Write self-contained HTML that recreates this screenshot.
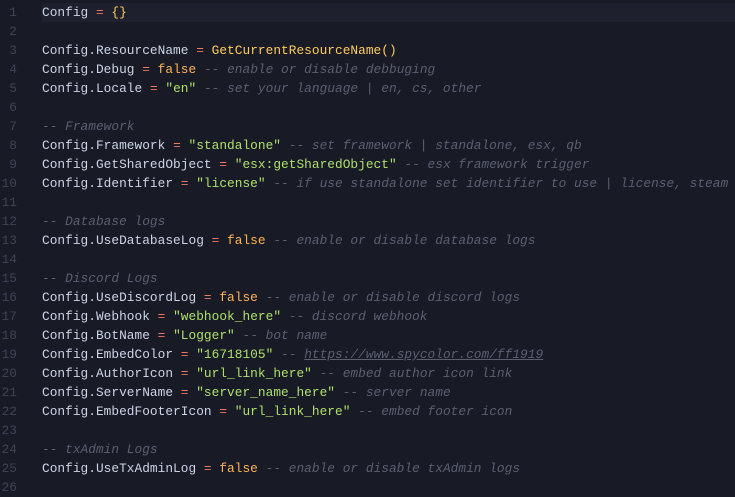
<!DOCTYPE html>
<html><head><meta charset="utf-8"><style>
html,body{margin:0;padding:0;background:#181a26;width:735px;height:497px;overflow:hidden}
.w{position:relative;font-family:"Liberation Mono",monospace;font-size:12.8px;letter-spacing:0.03px;color:#ccd4e6}
.l{position:absolute;left:0;height:19px;line-height:19px;white-space:pre;width:735px}
.n{position:absolute;left:0;width:17px;text-align:right;color:#3f4453}
.c{position:absolute;left:42px}
.hl{background:#1e202d}
.o{color:#f07860}.f{color:#ffb454}.s{color:#aee06a}.y{color:#ffcc5c}.cm{color:#5a6070;font-style:italic}
.u{text-decoration:underline}
</style></head><body><div class="w">
<div class="l hl" style="top:3px;left:42px;width:693px"></div>
<div class="l" style="top:3px"><span class="n">1</span><span class="c">Config <span class="o">=</span> <span class="y">{}</span></span></div>
<div class="l" style="top:22px"><span class="n">2</span></div>
<div class="l" style="top:41px"><span class="n">3</span><span class="c">Config.ResourceName <span class="o">=</span> <span class="y">GetCurrentResourceName()</span></span></div>
<div class="l" style="top:60px"><span class="n">4</span><span class="c">Config.Debug <span class="o">=</span> <span class="f">false</span> <span class="cm">-- enable or disable debbuging</span></span></div>
<div class="l" style="top:79px"><span class="n">5</span><span class="c">Config.Locale <span class="o">=</span> <span class="s">"en"</span> <span class="cm">-- set your language | en, cs, other</span></span></div>
<div class="l" style="top:98px"><span class="n">6</span></div>
<div class="l" style="top:117px"><span class="n">7</span><span class="c"><span class="cm">-- Framework</span></span></div>
<div class="l" style="top:136px"><span class="n">8</span><span class="c">Config.Framework <span class="o">=</span> <span class="s">"standalone"</span> <span class="cm">-- set framework | standalone, esx, qb</span></span></div>
<div class="l" style="top:155px"><span class="n">9</span><span class="c">Config.GetSharedObject <span class="o">=</span> <span class="s">"esx:getSharedObject"</span> <span class="cm">-- esx framework trigger</span></span></div>
<div class="l" style="top:174px"><span class="n">10</span><span class="c">Config.Identifier <span class="o">=</span> <span class="s">"license"</span> <span class="cm">-- if use standalone set identifier to use | license, steam</span></span></div>
<div class="l" style="top:193px"><span class="n">11</span></div>
<div class="l" style="top:212px"><span class="n">12</span><span class="c"><span class="cm">-- Database logs</span></span></div>
<div class="l" style="top:231px"><span class="n">13</span><span class="c">Config.UseDatabaseLog <span class="o">=</span> <span class="f">false</span> <span class="cm">-- enable or disable database logs</span></span></div>
<div class="l" style="top:250px"><span class="n">14</span></div>
<div class="l" style="top:269px"><span class="n">15</span><span class="c"><span class="cm">-- Discord Logs</span></span></div>
<div class="l" style="top:288px"><span class="n">16</span><span class="c">Config.UseDiscordLog <span class="o">=</span> <span class="f">false</span> <span class="cm">-- enable or disable discord logs</span></span></div>
<div class="l" style="top:307px"><span class="n">17</span><span class="c">Config.Webhook <span class="o">=</span> <span class="s">"webhook_here"</span> <span class="cm">-- discord webhook</span></span></div>
<div class="l" style="top:326px"><span class="n">18</span><span class="c">Config.BotName <span class="o">=</span> <span class="s">"Logger"</span> <span class="cm">-- bot name</span></span></div>
<div class="l" style="top:345px"><span class="n">19</span><span class="c">Config.EmbedColor <span class="o">=</span> <span class="s">"16718105"</span> <span class="cm">-- <span class="u">https://www.spycolor.com/ff1919</span></span></span></div>
<div class="l" style="top:364px"><span class="n">20</span><span class="c">Config.AuthorIcon <span class="o">=</span> <span class="s">"url_link_here"</span> <span class="cm">-- embed author icon link</span></span></div>
<div class="l" style="top:383px"><span class="n">21</span><span class="c">Config.ServerName <span class="o">=</span> <span class="s">"server_name_here"</span> <span class="cm">-- server name</span></span></div>
<div class="l" style="top:402px"><span class="n">22</span><span class="c">Config.EmbedFooterIcon <span class="o">=</span> <span class="s">"url_link_here"</span> <span class="cm">-- embed footer icon</span></span></div>
<div class="l" style="top:421px"><span class="n">23</span></div>
<div class="l" style="top:440px"><span class="n">24</span><span class="c"><span class="cm">-- txAdmin Logs</span></span></div>
<div class="l" style="top:459px"><span class="n">25</span><span class="c">Config.UseTxAdminLog <span class="o">=</span> <span class="f">false</span> <span class="cm">-- enable or disable txAdmin logs</span></span></div>
<div class="l" style="top:478px"><span class="n">26</span></div>
</div></body></html>
